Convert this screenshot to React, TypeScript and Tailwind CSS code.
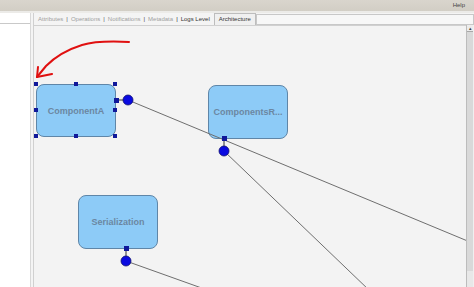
import React from "react";

const OX = 34;
const OY = 25;

function Node({ x, y, w, h, label }: { x: number; y: number; w: number; h: number; label: string }) {
  return (
    <div
      className="absolute flex items-center justify-center rounded-[8px] border border-[#5f86a8] bg-[#8dcbf7] text-[9px] font-bold text-[#6b87a2]"
      style={{ left: x - OX, top: y - OY, width: w, height: h, fontFamily: '"Liberation Sans", Arial, sans-serif' }}
    >
      <span className="pt-[2px]">{label}</span>
    </div>
  );
}

function Handle({ x, y, s = 4 }: { x: number; y: number; s?: number }) {
  return (
    <div
      className="absolute bg-[#10189a]"
      style={{ left: x - OX - s / 2, top: y - OY - s / 2, width: s, height: s }}
    />
  );
}

export default function App() {
  const tabFont = { fontFamily: '"Liberation Sans", Arial, sans-serif' };
  return (
    <div className="flex h-[287px] w-[474px] flex-col overflow-hidden bg-white">
      {/* top menu bar */}
      <div className="flex h-[11px] shrink-0 items-center justify-end bg-gradient-to-b from-[#d9d5cd] to-[#d2cec5] pr-[9px]">
        <span className="text-[6px] text-[#444]" style={tabFont}>Help</span>
      </div>
      <div className="h-[2px] shrink-0 bg-[#ecebe8]" />
      <div className="flex min-h-0 flex-1">
        {/* left panel */}
        <div className="flex w-[30px] shrink-0 flex-col bg-white">
          <div className="h-[11px] border-b border-[#c9c9c9]" />
        </div>
        <div className="w-[1px] shrink-0 bg-[#d8d8d8]" />
        <div className="w-[2px] shrink-0 bg-[#f4f4f4]" />
        <div className="w-[1px] shrink-0 bg-[#d0d0d0]" />
        {/* right */}
        <div className="flex w-[440px] shrink-0 flex-col">
          <div className="flex h-[12px] shrink-0 items-center bg-[#f4f4f4] text-[6px]" style={tabFont}>
            <div className="flex items-center gap-[3px] pl-[4px] text-[#a0a0a0]">
              <span>Attributes</span>
              <span className="text-[#555]">|</span>
              <span>Operations</span>
              <span className="text-[#555]">|</span>
              <span>Notifications</span>
              <span className="text-[#444]">|</span>
              <span>Metadata</span>
              <span className="text-[#222]">|</span>
              <span className="text-[#333]">Logs Level</span>
            </div>
            <div className="ml-[4px] flex h-[12px] items-center border border-b-0 border-[#bdbdbd] bg-[#f0f0f0] px-[4px] font-normal text-[#333]">
              Architecture
            </div>
            <div className="mt-[1px] h-[11px] flex-1 border border-[#c8c8c8] bg-[#f7f7f7]" />
          </div>
          <div className="flex min-h-0 flex-1">
            {/* canvas */}
            <div className="relative w-[432px] shrink-0 overflow-hidden border-t border-[#d0d0d0] bg-[#f3f3f3]">
              <Node x={36} y={83} w={80} h={53} label="ComponentA" />
              <Node x={208} y={84} w={80} h={54} label="ComponentsR..." />
              <Node x={78} y={194} w={80} h={54} label="Serialization" />
              <svg className="absolute left-0 top-0" width={440} height={270} viewBox={`${OX} ${OY} 440 270`}>
                {/* connection lines */}
                <line x1={128} y1={99} x2={470} y2={241} stroke="#6e6e6e" strokeWidth={1} />
                <line x1={224} y1={150} x2={370} y2={290} stroke="#6e6e6e" strokeWidth={1} />
                <line x1={126} y1={260} x2={210} y2={290} stroke="#6e6e6e" strokeWidth={1} />
                {/* stubs */}
                <line x1={116} y1={99} x2={124} y2={99} stroke="#333" strokeWidth={1} />
                <line x1={224} y1={138} x2={224} y2={146} stroke="#333" strokeWidth={1} />
                <line x1={126} y1={248} x2={126} y2={256} stroke="#333" strokeWidth={1} />
                {/* port circles */}
                <circle cx={128} cy={99} r={5} fill="#0a0ae0" stroke="#101070" strokeWidth={0.8} />
                <circle cx={224} cy={150} r={5} fill="#0a0ae0" stroke="#101070" strokeWidth={0.8} />
                <circle cx={126} cy={260} r={5} fill="#0a0ae0" stroke="#101070" strokeWidth={0.8} />
                {/* red arrow */}
                <path
                  d="M129 41 C 110 40, 92 41, 82 44 C 66 49, 54 57, 46 65 L 37 76"
                  fill="none"
                  stroke="#e01010"
                  strokeWidth={2}
                  strokeLinecap="round"
                  strokeLinejoin="round"
                />
                <path d="M37 76 L 52 73" fill="none" stroke="#e01010" strokeWidth={2.2} strokeLinecap="round" />
                <path d="M37 76 L 38 66" fill="none" stroke="#e01010" strokeWidth={2} strokeLinecap="round" />
              </svg>
              {/* selection handles */}
              <Handle x={36} y={83} />
              <Handle x={76} y={83} />
              <Handle x={115} y={83} />
              <Handle x={36} y={109} />
              <Handle x={115} y={109} />
              <Handle x={36} y={135} />
              <Handle x={76} y={135} />
              <Handle x={115} y={135} />
              <Handle x={116} y={99} s={5} />
              <Handle x={224} y={137} s={5} />
              <Handle x={126} y={247} s={5} />
            </div>
            {/* scrollbar */}
            <div className="flex w-[8px] shrink-0 flex-col border-l border-[#bcbcbc] border-r border-r-[#f0f0f0] bg-[#d9d9d9]">
              <div className="flex h-[7px] shrink-0 items-center justify-center border-b border-[#a8a8a8] bg-[#ececec] text-[5px] leading-none text-[#444]">
                ▴
              </div>
              <div className="flex-1" />
              <div className="h-[16px] shrink-0 bg-[#e8e8e8]" />
            </div>
          </div>
        </div>
      </div>
    </div>
  );
}
